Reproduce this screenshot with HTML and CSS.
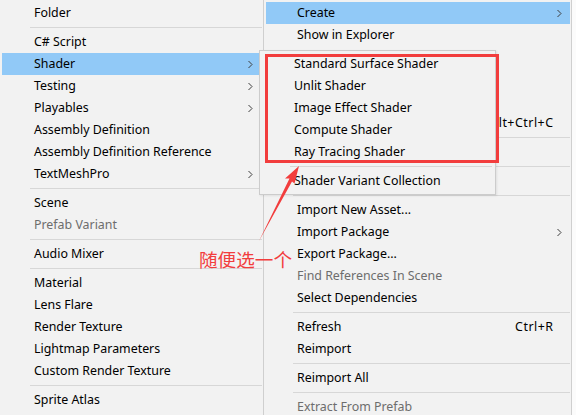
FILE: index.html
```html
<!DOCTYPE html>
<html lang="zh-CN">
<head>
<meta charset="utf-8">
<title>Create menu</title>
<link rel="stylesheet" href="styles.css">
</head>
<body>
<div class="screen">
  <div class="menu menu-left">
    <div class="item">Folder</div>
    <div class="sep"></div>
    <div class="item">C# Script</div>
    <div class="item active"><span class="label">Shader</span><svg class="chev" viewBox="0 0 5 9" width="5" height="9"><polyline points="0.5,1 4,4.5 0.5,8"/></svg></div>
    <div class="item"><span class="label">Testing</span><svg class="chev" viewBox="0 0 5 9" width="5" height="9"><polyline points="0.5,1 4,4.5 0.5,8"/></svg></div>
    <div class="item"><span class="label">Playables</span><svg class="chev" viewBox="0 0 5 9" width="5" height="9"><polyline points="0.5,1 4,4.5 0.5,8"/></svg></div>
    <div class="item">Assembly Definition</div>
    <div class="item">Assembly Definition Reference</div>
    <div class="item"><span class="label">TextMeshPro</span><svg class="chev" viewBox="0 0 5 9" width="5" height="9"><polyline points="0.5,1 4,4.5 0.5,8"/></svg></div>
    <div class="sep"></div>
    <div class="item">Scene</div>
    <div class="item disabled">Prefab Variant</div>
    <div class="sep"></div>
    <div class="item">Audio Mixer</div>
    <div class="sep"></div>
    <div class="item">Material</div>
    <div class="item">Lens Flare</div>
    <div class="item">Render Texture</div>
    <div class="item">Lightmap Parameters</div>
    <div class="item">Custom Render Texture</div>
    <div class="sep"></div>
    <div class="item">Sprite Atlas</div>
  </div>

  <div class="menu menu-right">
    <div class="item active"><span class="label">Create</span><svg class="chev" viewBox="0 0 5 9" width="5" height="9"><polyline points="0.5,1 4,4.5 0.5,8"/></svg></div>
    <div class="item">Show in Explorer</div>
    <div class="item"><span class="label covered">Open</span></div>
    <div class="item"><span class="label covered">Delete</span></div>
    <div class="item"><span class="label covered">Rename</span></div>
    <div class="item"><span class="label covered">Copy Path</span><span class="sc">Alt+Ctrl+C</span></div>
    <div class="sep"></div>
    <div class="item"><span class="label covered">Open Scene Additive</span></div>
    <div class="sep"></div>
    <div class="item"><span class="label covered">Open C# Project</span></div>
    <div class="sep"></div>
    <div class="item">Import New Asset...</div>
    <div class="item"><span class="label">Import Package</span><svg class="chev" viewBox="0 0 5 9" width="5" height="9"><polyline points="0.5,1 4,4.5 0.5,8"/></svg></div>
    <div class="item">Export Package...</div>
    <div class="item disabled">Find References In Scene</div>
    <div class="item">Select Dependencies</div>
    <div class="sep"></div>
    <div class="item"><span class="label">Refresh</span><span class="sc">Ctrl+R</span></div>
    <div class="item">Reimport</div>
    <div class="sep"></div>
    <div class="item">Reimport All</div>
    <div class="sep"></div>
    <div class="item disabled">Extract From Prefab</div>
  </div>

  <div class="menu submenu">
    <div class="item">Standard Surface Shader</div>
    <div class="item">Unlit Shader</div>
    <div class="item">Image Effect Shader</div>
    <div class="item">Compute Shader</div>
    <div class="item">Ray Tracing Shader</div>
    <div class="sep"></div>
    <div class="item">Shader Variant Collection</div>
  </div>

  <div class="mark-box"></div>
  <div class="mark-text">随便选一个</div>
  <svg class="mark-arrow" viewBox="0 0 576 415" width="576" height="415">
    <polygon points="259,241 289.5,178.5 285,178.5 299,166 294.5,183.5 292,181.5"/>
  </svg>
</div>
</body>
</html>
```

FILE: styles.css
```css
html, body {
  margin: 0;
  padding: 0;
  background: #fbfbfb;
}

.screen {
  position: relative;
  width: 576px;
  height: 415px;
  overflow: hidden;
  display: flex;
  align-items: flex-start;
  font-family: "Noto Sans", "Open Sans", sans-serif;
  font-size: 12.4px;
  color: #000;
}

.menu {
  background: #f2f2f2;
  box-sizing: border-box;
}

.item {
  height: 22px;
  line-height: 22px;
  display: flex;
  align-items: center;
  white-space: nowrap;
}

.item .label {
  flex: 1;
}

/* labels that lie fully under the open submenu */
.item .covered {
  visibility: hidden;
}

.item.active {
  background: #91c9f7;
}

.item.disabled {
  color: #6d6d6d;
}

.chev {
  display: block;
  flex: none;
}

.chev polyline {
  fill: none;
  stroke: #3c3c3c;
  stroke-width: 1;
}

.sep {
  height: 1px;
  background: #d7d7d7;
}

/* left menu */
.menu-left {
  width: 264px;
  height: 430px;
  padding: 2px 3px 0 2px;
  border-right: 1px solid #cfcfcf;
}

.menu-left .item {
  padding: 0 7px 0 32px;
}

.menu-left .sep {
  margin: 3px -2px 3px 28px;
}

/* right menu */
.menu-right {
  width: 308px;
  height: 430px;
  padding: 2px 1px 0 2px;
  border-right: 1px solid #cfcfcf;
}

.menu-right .item {
  padding: 0 8px 0 31px;
}

.menu-right .sep {
  margin: 3px 0 3px 27px;
}

.sc {
  letter-spacing: 0.5px;
  margin-right: 8.5px;
}

/* shader submenu (overlays both menus) */
.submenu {
  position: absolute;
  left: 259px;
  top: 50px;
  width: 237px;
  padding: 2px 1px 2px 1px;
  border: 1px solid #cccccc;
  box-shadow: 1px 1px 2px rgba(0, 0, 0, 0.08);
}

.submenu .item {
  padding: 0 8px 0 33px;
}

.submenu .sep {
  margin: 3px 2px 3px 29px;
}

/* annotations */
.mark-box {
  position: absolute;
  left: 265px;
  top: 54px;
  width: 234px;
  height: 109px;
  box-sizing: border-box;
  border: 3px solid #f23d3d;
}

.mark-text {
  position: absolute;
  left: 199px;
  top: 247px;
  font-family: "Noto Sans CJK SC", sans-serif;
  font-size: 18.6px;
  line-height: 24px;
  color: #f23d3d;
  white-space: nowrap;
}

.mark-arrow {
  position: absolute;
  left: 0;
  top: 0;
  pointer-events: none;
}

.mark-arrow polygon {
  fill: #f23d3d;
}
```
